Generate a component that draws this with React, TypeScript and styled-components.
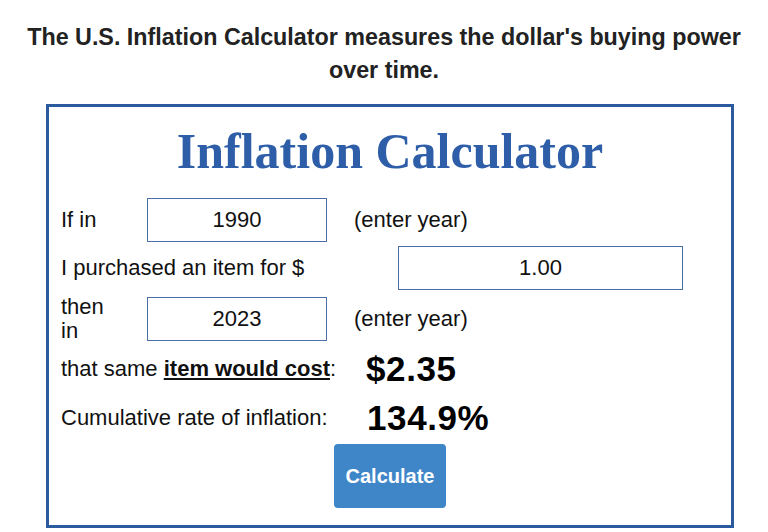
import React from 'react';
import styled, { createGlobalStyle } from 'styled-components';

const GlobalStyle = createGlobalStyle`
  html, body {
    margin: 0;
    padding: 0;
    background: #ffffff;
  }
  body {
    font-family: 'Liberation Sans', Arial, sans-serif;
    color: #111111;
  }
`;

const Page = styled.div`
  width: 768px;
  height: 532px;
  overflow: hidden;
  display: flex;
  flex-direction: column;
  align-items: center;
`;

const Intro = styled.h2`
  margin: 21px 0 0;
  width: 740px;
  text-align: center;
  font-size: 23.3px;
  line-height: 33px;
  font-weight: 700;
  color: #222222;
`;

const CalcBox = styled.div`
  box-sizing: border-box;
  width: 688px;
  height: 424px;
  margin: 17px 0 0 12px;
  border: 3px solid #2c5a9e;
  padding: 0 12px;
  display: flex;
  flex-direction: column;
`;

const Title = styled.h1`
  margin: 16px 0 17px;
  text-align: center;
  font-family: 'Liberation Serif', 'Times New Roman', serif;
  font-size: 50px;
  line-height: 56px;
  font-weight: 700;
  color: #2e5ea8;
`;

const Row = styled.div<{ $height: number }>`
  display: flex;
  align-items: center;
  height: ${({ $height }) => $height}px;
  font-size: 22px;
`;

const Label = styled.div<{ $width: number; $wrap?: number }>`
  flex: 0 0 ${({ $width }) => $width}px;
  line-height: 24px;
  & > span {
    display: inline-block;
    width: ${({ $wrap }) => ($wrap ? `${$wrap}px` : 'auto')};
  }
`;

const Field = styled.div<{ $width: number }>`
  box-sizing: border-box;
  width: ${({ $width }) => $width}px;
  height: 44px;
  border: 1.5px solid #4a6fa8;
  display: flex;
  align-items: center;
  justify-content: center;
  font-size: 22px;
`;

const Hint = styled.div`
  margin-left: 27px;
`;

const Strong = styled.span`
  font-weight: 700;
  text-decoration: underline;
`;

const Result = styled.div`
  font-size: 35px;
  font-weight: 700;
  color: #000000;
  letter-spacing: 0.6px;
`;

const ButtonRow = styled.div`
  display: flex;
  padding-left: 273px;
  margin-top: 1px;
`;

const CalcButton = styled.button`
  width: 112px;
  height: 64px;
  border: none;
  border-radius: 4px;
  background: #3f86c8;
  color: #ffffff;
  font-family: 'Liberation Sans', Arial, sans-serif;
  font-size: 20px;
  font-weight: 700;
  cursor: pointer;
`;

export default function App() {
  return (
    <>
      <GlobalStyle />
      <Page>
        <Intro>The U.S. Inflation Calculator measures the dollar's buying power over time.</Intro>
        <CalcBox>
          <Title>Inflation Calculator</Title>
          <Row $height={48}>
            <Label $width={86}>If in</Label>
            <Field $width={180}>1990</Field>
            <Hint>(enter year)</Hint>
          </Row>
          <Row $height={48}>
            <Label $width={337}>I purchased an item for $</Label>
            <Field $width={285}>1.00</Field>
          </Row>
          <Row $height={54}>
            <Label $width={86} $wrap={60}>
              <span>then in</span>
            </Label>
            <Field $width={180}>2023</Field>
            <Hint>(enter year)</Hint>
          </Row>
          <Row $height={46}>
            <Label $width={305}>
              that same <Strong>item would cost</Strong>:
            </Label>
            <Result>$2.35</Result>
          </Row>
          <Row $height={51}>
            <Label $width={306}>Cumulative rate of inflation:</Label>
            <Result>134.9%</Result>
          </Row>
          <ButtonRow>
            <CalcButton>Calculate</CalcButton>
          </ButtonRow>
        </CalcBox>
      </Page>
    </>
  );
}
